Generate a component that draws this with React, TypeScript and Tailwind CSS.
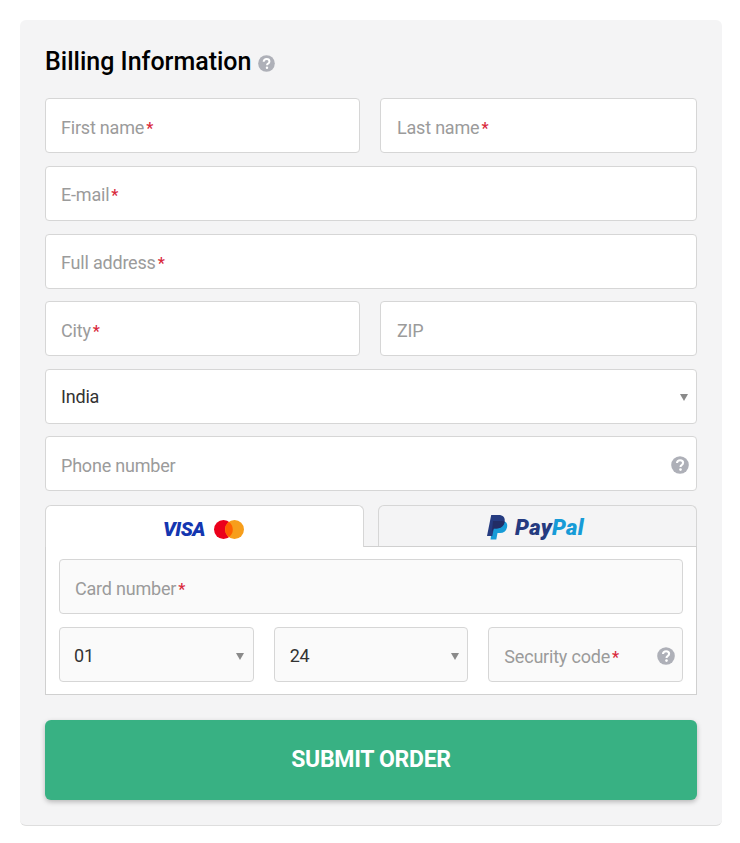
import React from 'react';

const font = { fontFamily: 'Roboto, sans-serif' };

function HelpIcon({ size = 18, className = '' }: { size?: number; className?: string }) {
    return (
        <svg width={size} height={size} viewBox="0 0 18 18" className={`shrink-0 ${className}`}>
            <circle cx="9" cy="9" r="8.8" fill="#aeb0b8" />
            <path d="M6 7.100c0-1.800 1.300-2.900 3.100-2.900 1.700 0 3 1.100 3 2.600 0 1.200-.7 1.800-1.500 2.300-.7.400-1 .7-1 1.400v.4" fill="none" stroke="#fff" strokeWidth="2.100" />
            <circle cx="9.500" cy="13.600" r="1.300" fill="#fff" />
        </svg>
    );
}

function Caret() {
    return <span className="w-0 h-0 mr-[1px] border-l-[4px] border-r-[4px] border-t-[7px] border-l-transparent border-r-transparent border-t-[#8a8a8a] mt-[3px]" />;
}

function Field({
    label,
    required,
    value,
    caret,
    help,
    tinted,
    labelClass = '',
}: {
    label?: string;
    required?: boolean;
    value?: string;
    caret?: boolean;
    help?: boolean;
    tinted?: boolean;
    labelClass?: string;
}) {
    return (
        <div
            className={`h-[55px] rounded-[4px] border border-[#d6d6d6] flex items-center justify-between pl-[15px] pr-[7.5px] text-[18px] tracking-[-0.2px] ${
                tinted ? 'bg-[#fafafa]' : 'bg-white'
            }`}
        >
            {value ? (
                <span className={`text-[#333333] ${tinted ? 'pt-[1px]' : ''} ${labelClass}`}>{value}</span>
            ) : (
                <span className={`text-[#9b9b9b] whitespace-nowrap pt-[3px] ${labelClass}`}>
                    {label}
                    {required && <span className="text-[#d9293c] ml-[2px] text-[16px] font-medium">*</span>}
                </span>
            )}
            {caret && <Caret />}
            {help && <HelpIcon className="mt-[2px]" />}
        </div>
    );
}

function VisaMark() {
    return (
        <div className="flex items-center gap-[9px] -ml-[2px] pt-[5px]">
            <span className="text-[#1436b0] text-[20px] leading-none font-black italic tracking-[-0.5px]">VISA</span>
            <svg width="30" height="19" viewBox="0 0 30 19">
                <circle cx="9.500" cy="9.500" r="9.500" fill="#eb001b" />
                <circle cx="20.500" cy="9.500" r="9.500" fill="#f79e1b" />
                <path d="M15 1.900a9.500 9.500 0 0 1 0 15.200a9.500 9.500 0 0 1 0-15.200z" fill="#ff5f00" />
            </svg>
        </div>
    );
}

function PayPalMark() {
    return (
        <div className="flex items-center gap-[7px] -ml-[4px] pt-[3px]">
            <svg width="21" height="25" viewBox="0 0 21 25">
                <path d="M6 6h9c4 0 6 2.500 5 6.500-.9 3.700-3.500 5.500-7 5.500h-2.500l-1.200 6.500H3.500z" fill="#179bd7" />
                <path d="M4.200 0h7.300c4.500 0 7 2.400 6.100 6.800-.9 4.400-3.900 6.700-8 6.700H6.800L5.300 21H0z" fill="#253b80" />
                <path d="M6 6h8.500c1.300 0 2.400.2 3.200.7-.9 4.400-3.900 6.700-8 6.700H6.800l-1.900 3.600z" fill="#222d65" />
            </svg>
            <span className="text-[22px] leading-none font-black italic tracking-[0.3px]">
                <span className="text-[#253b80]">Pay</span>
                <span className="text-[#179bd7]">Pal</span>
            </span>
        </div>
    );
}

export default function App() {
    return (
        <div className="w-[740px] h-[843px] bg-white pt-[20px] pl-[20px]" style={font}>
            <div className="w-[702px] h-[806px] bg-[#f4f4f5] rounded-[6px] border-b border-[#dedede] px-[25px] pt-[25px]">
                <div className="flex items-center gap-[7px] h-[33px] mb-[20.4px]">
                    <h2 className="text-[25px] leading-none font-medium text-black">Billing Information</h2>
                    <HelpIcon size={17} className="mt-[3px]" />
                </div>

                <div className="flex flex-col gap-[12.6px]">
                    <div className="grid grid-cols-[315px_317px] gap-[20px]">
                        <Field label="First name" required />
                        <Field label="Last name" required labelClass="ml-[1px]" />
                    </div>
                    <Field label="E-mail" required />
                    <Field label="Full address" required />
                    <div className="grid grid-cols-[315px_317px] gap-[20px]">
                        <Field label="City" required />
                        <Field label="ZIP" labelClass="ml-[1px]" />
                    </div>
                    <Field value="India" caret />
                    <Field label="Phone number" help />
                </div>

                <div className="mt-[13.8px]">
                    <div className="flex justify-between h-[42px] relative z-10">
                        <div className="w-[319px] h-[42px] bg-white rounded-t-[6px] border border-b-0 border-[#d6d6d6] flex items-center justify-center">
                            <VisaMark />
                        </div>
                        <div className="w-[319px] h-[41px] bg-[#f4f4f5] rounded-t-[6px] border border-b-0 border-[#d6d6d6] flex items-center justify-center">
                            <PayPalMark />
                        </div>
                    </div>
                    <div className="-mt-px h-[149px] bg-white border border-[#d0d0d0] px-[13px] pt-[12px]">
                        <Field label="Card number" required tinted />
                        <div className="grid grid-cols-3 gap-[20px] mt-[13px]">
                            <Field value="01" caret tinted labelClass="-ml-[1px]" />
                            <Field value="24" caret tinted />
                            <Field label="Security code" required help tinted />
                        </div>
                    </div>
                </div>

                <button className="mt-[25px] w-full h-[80px] rounded-[6px] bg-[#38b183] text-white text-[23px] font-bold tracking-[-0.3px] shadow-[0_2px_5px_rgba(0,0,0,0.25)]">
                    SUBMIT ORDER
                </button>
            </div>
        </div>
    );
}
